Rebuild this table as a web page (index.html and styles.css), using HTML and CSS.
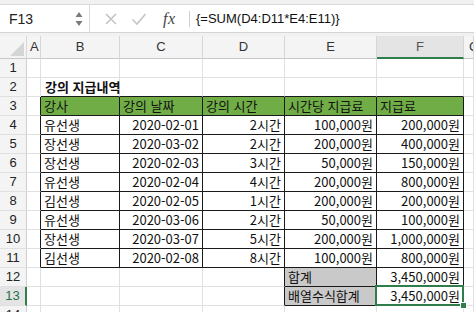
FILE: index.html
```html
<!DOCTYPE html>
<html lang="ko">
<head>
<meta charset="utf-8">
<link rel="stylesheet" href="styles.css">
</head>
<body>
<div class="app">
  <div class="topstrip"></div>
  <div class="fbar">
    <div class="namebox">
      <span class="nb-text">F13</span>
      <svg class="spin" width="8" height="16" viewBox="0 0 8 16"><path d="M4 1 L7.5 6 L0.5 6 Z" fill="#7a7a7a"/><path d="M4 15 L7.5 10 L0.5 10 Z" fill="#7a7a7a"/></svg>
    </div>
    <div class="fbtns">
      <svg class="ic" width="14" height="14" viewBox="0 0 14 14"><path d="M2 2 L12 12 M12 2 L2 12" stroke="#c4c4c4" stroke-width="1.6" fill="none"/></svg>
      <svg class="ic" width="16" height="14" viewBox="0 0 16 14"><path d="M1.5 7.5 L6 12 L14.5 2" stroke="#c4c4c4" stroke-width="1.6" fill="none"/></svg>
      <span class="fx">fx</span>
    </div>
    <div class="formula"><span class="fsep"></span>{=SUM(D4:D11*E4:E11)}</div>
  </div>
  <div class="sheet">
    <div class="row hrow">
      <div class="c corner"><svg width="14" height="14" viewBox="0 0 14 14"><path d="M14 0 L14 14 L0 14 Z" fill="#d5d5d5"/></svg></div>
      <div class="c ch">A</div><div class="c ch">B</div><div class="c ch">C</div><div class="c ch">D</div><div class="c ch">E</div><div class="c ch chsel">F</div><div class="c ch chg">G</div>
    </div>
    <div class="row">
      <div class="c rh">1</div><div class="c"></div><div class="c"></div><div class="c"></div><div class="c"></div><div class="c"></div><div class="c"></div><div class="c"></div>
    </div>
    <div class="row">
      <div class="c rh">2</div><div class="c"></div><div class="c bb ov title">강의 지급내역</div><div class="c bb"></div><div class="c bb"></div><div class="c bb"></div><div class="c bb"></div><div class="c"></div>
    </div>
    <div class="row">
      <div class="c rh">3</div><div class="c br"></div><div class="c bb br gr">강사</div><div class="c bb br gr">강의 날짜</div><div class="c bb br gr">강의 시간</div><div class="c bb br gr">시간당 지급료</div><div class="c bb br gr">지급료</div><div class="c"></div>
    </div>
    <div class="row">
      <div class="c rh">4</div><div class="c br"></div><div class="c bb br">유선생</div><div class="c bb br r">2020-02-01</div><div class="c bb br r">2시간</div><div class="c bb br r">100,000원</div><div class="c bb br r">200,000원</div><div class="c"></div>
    </div>
    <div class="row">
      <div class="c rh">5</div><div class="c br"></div><div class="c bb br">장선생</div><div class="c bb br r">2020-03-02</div><div class="c bb br r">2시간</div><div class="c bb br r">200,000원</div><div class="c bb br r">400,000원</div><div class="c"></div>
    </div>
    <div class="row">
      <div class="c rh">6</div><div class="c br"></div><div class="c bb br">장선생</div><div class="c bb br r">2020-02-03</div><div class="c bb br r">3시간</div><div class="c bb br r">50,000원</div><div class="c bb br r">150,000원</div><div class="c"></div>
    </div>
    <div class="row">
      <div class="c rh">7</div><div class="c br"></div><div class="c bb br">유선생</div><div class="c bb br r">2020-02-04</div><div class="c bb br r">4시간</div><div class="c bb br r">200,000원</div><div class="c bb br r">800,000원</div><div class="c"></div>
    </div>
    <div class="row">
      <div class="c rh">8</div><div class="c br"></div><div class="c bb br">김선생</div><div class="c bb br r">2020-02-05</div><div class="c bb br r">1시간</div><div class="c bb br r">200,000원</div><div class="c bb br r">200,000원</div><div class="c"></div>
    </div>
    <div class="row">
      <div class="c rh">9</div><div class="c br"></div><div class="c bb br">유선생</div><div class="c bb br r">2020-03-06</div><div class="c bb br r">2시간</div><div class="c bb br r">50,000원</div><div class="c bb br r">100,000원</div><div class="c"></div>
    </div>
    <div class="row">
      <div class="c rh">10</div><div class="c br"></div><div class="c bb br">장선생</div><div class="c bb br r">2020-03-07</div><div class="c bb br r">5시간</div><div class="c bb br r">200,000원</div><div class="c bb br r">1,000,000원</div><div class="c"></div>
    </div>
    <div class="row">
      <div class="c rh">11</div><div class="c br"></div><div class="c bb br">김선생</div><div class="c bb br r">2020-02-08</div><div class="c bb br r">8시간</div><div class="c bb br r">100,000원</div><div class="c bb br r">800,000원</div><div class="c"></div>
    </div>
    <div class="row">
      <div class="c rh">12</div><div class="c"></div><div class="c"></div><div class="c"></div><div class="c br"></div><div class="c bb br gy">합계</div><div class="c bb br r">3,450,000원</div><div class="c"></div>
    </div>
    <div class="row">
      <div class="c rh rhsel">13</div><div class="c"></div><div class="c"></div><div class="c"></div><div class="c br"></div><div class="c bb br gy">배열수식합계</div><div class="c bb br r sel">3,450,000원</div><div class="c"></div>
    </div>
    <div class="row">
      <div class="c rh">14</div><div class="c"></div><div class="c"></div><div class="c"></div><div class="c"></div><div class="c"></div><div class="c"></div><div class="c"></div>
    </div>
  </div>
</div>
</body>
</html>
```
FILE: styles.css
```css
html, body {
  margin: 0;
  padding: 0;
  background: #ffffff;
}
.app {
  width: 474px;
  height: 312px;
  overflow: hidden;
  background: #f1f1f1;
  font-family: "Noto Sans CJK KR", "Liberation Sans", sans-serif;
}
.topstrip {
  height: 4px;
  background: #f1f1f1;
  border-bottom: 1px solid #d9d9d9;
}
.fbar {
  height: 27px;
  background: #ffffff;
  border-bottom: 1px solid #d4d4d4;
  display: flex;
  align-items: stretch;
}
.namebox {
  width: 89px;
  border-right: 1px solid #d9d9d9;
  display: flex;
  align-items: center;
  justify-content: space-between;
  padding: 0 6px 0 9px;
  box-sizing: border-box;
  width: 90px;
}
.nb-text {
  font-family: "Liberation Sans", sans-serif;
  font-size: 14px;
  color: #222;
}
.fbtns {
  width: 99px;
  display: flex;
  align-items: center;
  gap: 0;
  padding-left: 14px;
  box-sizing: border-box;
}
.fbtns .ic:first-child { margin-right: 13px; }
.fbtns .ic:nth-child(2) { margin-right: 16px; }
.fx {
  font-family: "Liberation Serif", serif;
  font-style: italic;
  font-size: 16px;
  color: #444;
  letter-spacing: 0.5px;
}
.formula {
  flex: 1;
  display: flex;
  align-items: center;
  font-family: "Liberation Sans", sans-serif;
  font-size: 13px;
  color: #111;
}
.fsep {
  width: 1px;
  height: 16px;
  background: #d0d0d0;
  margin-right: 6px;
}
.sheet {
  margin-top: 3px;
  background: #ffffff;
}
.row {
  display: grid;
  grid-template-columns: 27px 14px 79px 83px 82px 92px 87px 1fr;
  height: 19px;
}
.c {
  box-sizing: border-box;
  border-right: 1px solid #e0e0e0;
  border-bottom: 1px solid #e0e0e0;
  padding: 0 3px;
  font-size: 13px;
  line-height: 18px;
  color: #111;
  white-space: nowrap;
  overflow: hidden;
  background: #ffffff;
}
.hrow { height: 23px; }
.hrow .c {
  background: #f4f4f4;
  border-bottom-color: #c9c9c9;
  border-right-color: #d6d6d6;
  font-family: "Liberation Sans", sans-serif;
  font-size: 13px;
  line-height: 22px;
  text-align: center;
  color: #333;
}
.corner {
  display: flex;
  align-items: flex-end;
  justify-content: flex-end;
  padding: 0 2px 2px 0 !important;
}
.chsel {
  background: #e4e4e4 !important;
  border-bottom: 2px solid #2f7d4a !important;
  color: #555 !important;
  line-height: 21px !important;
}
.chg { text-align: left !important; padding-left: 5px; }
.rh {
  background: #f4f4f4;
  border-right-color: #cfcfcf;
  border-bottom-color: #e0e0e0;
  font-family: "Liberation Sans", sans-serif;
  text-align: center;
  color: #222;
  padding: 0;
}
.rhsel {
  background: #e4e4e4;
  color: #217346;
  border-right: 2px solid #2f7d4a;
}
.bb { border-bottom-color: #1a1a1a; }
.br { border-right-color: #1a1a1a; }
.r { text-align: right; }
.ov { overflow: visible; }
.title { font-weight: bold; padding-left: 4px; }
.gr { background: #70ad47; }
.gy { background: #c9c9c9; }
.sel { position: relative; overflow: visible; }
.sel::after {
  content: "";
  position: absolute;
  left: -2px;
  top: -2px;
  right: -1px;
  bottom: -1px;
  border: 2px solid #2f7d4a;
}
.sel::before {
  content: "";
  position: absolute;
  right: -4px;
  bottom: -4px;
  width: 5px;
  height: 5px;
  background: #2f7d4a;
  border: 1px solid #ffffff;
  z-index: 1;
}
```
